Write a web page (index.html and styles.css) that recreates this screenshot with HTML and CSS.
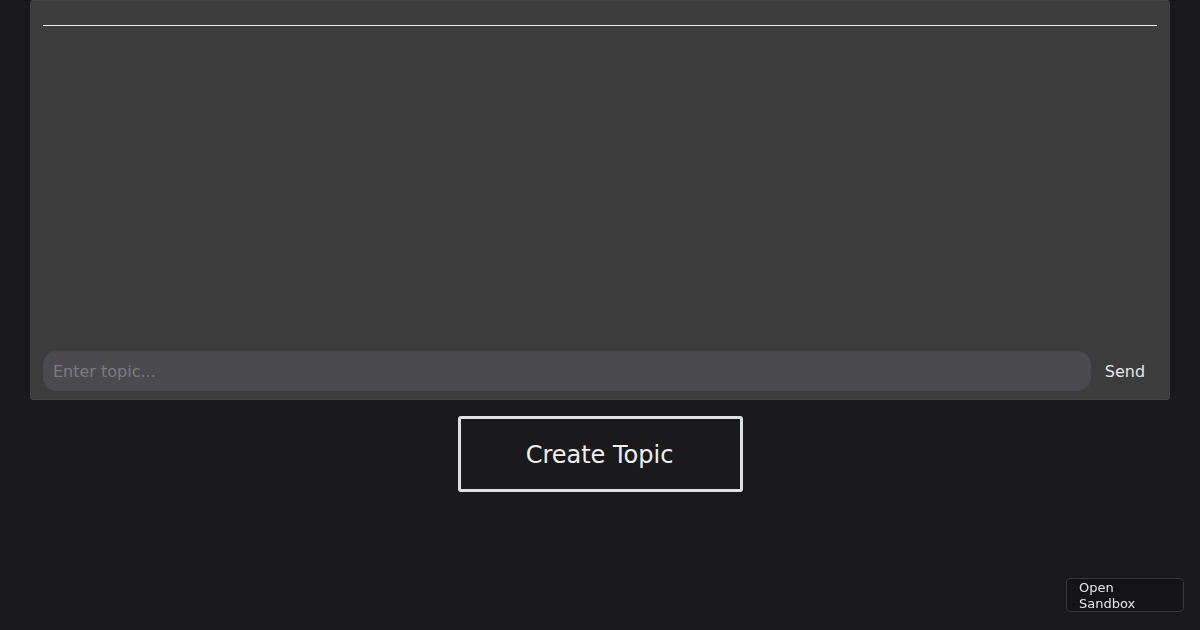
FILE: index.html
```html
<!DOCTYPE html>
<html lang="en">
<head>
<meta charset="utf-8">
<title>Topics</title>
<link rel="stylesheet" href="styles.css">
</head>
<body>
<main class="page">
  <section class="panel">
    <hr class="rule">
    <div class="messages"></div>
    <form class="composer">
      <input class="topic-input" type="text" placeholder="Enter topic...">
      <button class="send" type="button">Send</button>
    </form>
  </section>
  <div class="actions">
    <button class="create" type="button">Create Topic</button>
  </div>
</main>
<button class="sandbox" type="button">Open<br>Sandbox</button>
</body>
</html>
```
FILE: styles.css
```css
* { box-sizing: border-box; }
html, body {
  margin: 0;
  height: 100%;
  background: #19191b;
  font-family: "DejaVu Sans", Verdana, sans-serif;
  color: #e8e8e8;
}
.page {
  padding: 0 30px;
}
.panel {
  height: 400px;
  background: #3c3c3c;
  border: 1px solid #444;
  border-radius: 3px;
  padding: 12px 12px 8px;
  display: flex;
  flex-direction: column;
}
.rule {
  margin: 12px 0 0;
  border: 0;
  height: 1px;
  background: #f0f0f0;
}
.messages { flex: 1; }
.composer {
  display: flex;
  height: 40px;
  margin: 0;
}
.topic-input {
  flex: 1;
  height: 40px;
  border: 0;
  border-radius: 14px;
  background: #4b4a4f;
  padding: 0 10px;
  font-family: inherit;
  font-size: 16px;
  color: #e8e8e8;
  outline: none;
}
.topic-input::placeholder { color: #7c7b80; }
.send {
  width: 66px;
  border: 0;
  background: transparent;
  color: #e6e6e6;
  font-family: inherit;
  font-size: 16px;
  padding: 0 0 0 2px;
  text-align: center;
}
.actions {
  display: flex;
  justify-content: center;
  padding-top: 16px;
}
.create {
  width: 285px;
  height: 76px;
  background: #1a1a1c;
  border: 3px solid #dfe0e2;
  border-radius: 3px;
  color: #f0f0f0;
  font-family: inherit;
  font-size: 24px;
  padding: 2px 1px 0 0;
}
.sandbox {
  position: fixed;
  right: 16px;
  bottom: 18px;
  width: 118px;
  height: 34px;
  background: #141416;
  border: 1px solid #38383b;
  border-radius: 4px;
  color: #e6e6e6;
  font-family: inherit;
  font-size: 13px;
  line-height: 16px;
  text-align: left;
  padding: 1px 0 0 12px;
}
```
